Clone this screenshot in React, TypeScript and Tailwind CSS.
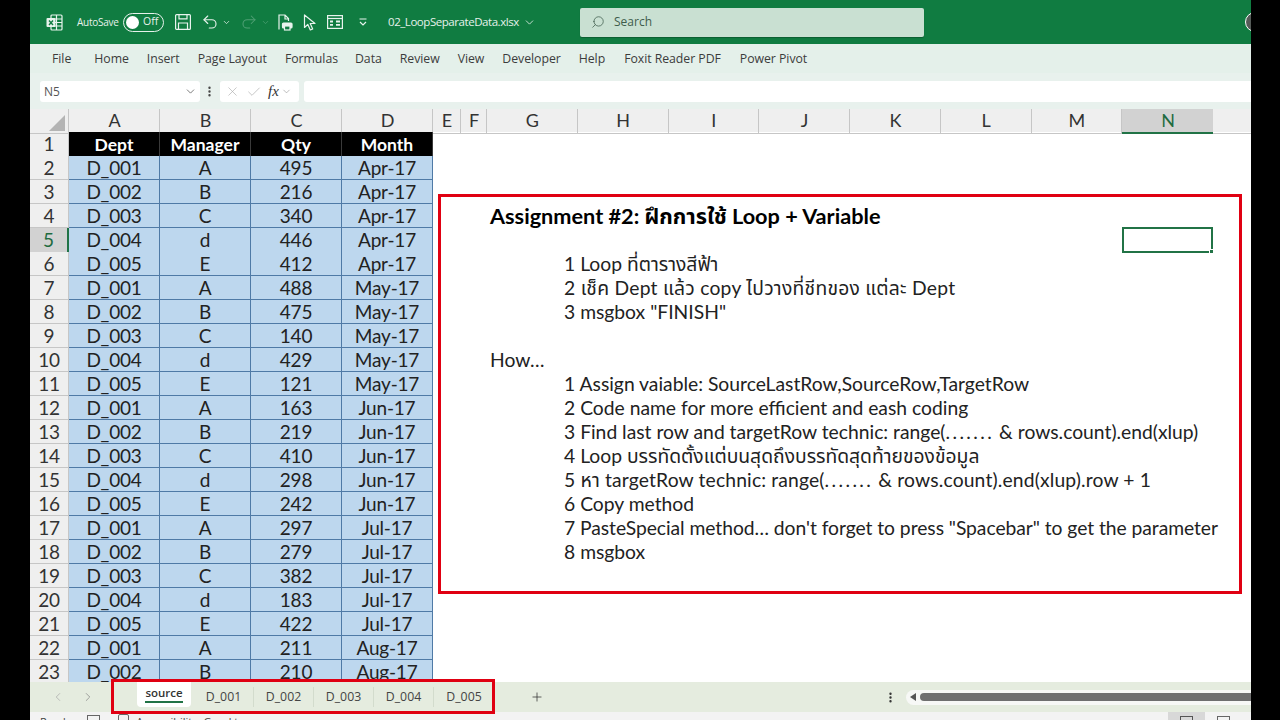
import type { ReactNode } from "react";
import { Check, ChevronDown, ChevronLeft, ChevronRight, MoreVertical, Plus, Redo2, Search, Undo2, X } from "lucide-react";

const UI = "font-['Open_Sans','Noto_Sans',sans-serif]";
const CELL = "font-['Lato','Noto_Sans','Noto_Sans_Thai','Tahoma','DejaVu_Sans',sans-serif]";

const depts = ["D_001", "D_002", "D_003", "D_004", "D_005"];
const managers = ["A", "B", "C", "d", "E"];
const qty = [495, 216, 340, 446, 412, 488, 475, 140, 429, 121, 163, 219, 410, 298, 242, 297, 279, 382, 183, 422, 211, 210];
const months = ["Apr-17", "May-17", "Jun-17", "Jul-17", "Aug-17"];
const columns = ["A", "B", "C", "D", "E", "F", "G", "H", "I", "J", "K", "L", "M", "N"];
const ribbon: [string, string][] = [
  ["File", "ml-[22px]"], ["Home", "ml-[23px]"], ["Insert", "ml-[18px]"], ["Page Layout", "ml-[18px]"], ["Formulas", "ml-[18px]"],
  ["Data", "ml-[17px]"], ["Review", "ml-[18px]"], ["View", "ml-[18px]"], ["Developer", "ml-[18px]"], ["Help", "ml-[18px]"],
  ["Foxit Reader PDF", "ml-[19px]"], ["Power Pivot", "ml-[19px]"],
];
const GRID = "grid grid-cols-[39px_91px_91px_91px_91px_28px_26px_repeat(8,90.75px)_38px]";

function ExcelLogo() {
  return (
    <svg width="17" height="17" viewBox="0 0 17 17" fill="none" stroke="#e8f3ed" strokeWidth="1.2">
      <rect x="5" y="1" width="11" height="15" rx="1" />
      <path d="M10.5 1v15M5 5h11M5 8.5h11M5 12h11" />
      <rect x="0.5" y="4" width="9" height="9" rx="1" fill="#e8f3ed" stroke="none" />
      <path d="M3 6.5l4 4.5M7 6.5l-4 4.5" stroke="#107c41" strokeWidth="1.4" />
    </svg>
  );
}

function SaveIcon() {
  return (
    <svg width="16" height="16" viewBox="0 0 16 16" fill="none" stroke="#e8f3ed" strokeWidth="1.2">
      <rect x="0.6" y="0.6" width="14.8" height="14.8" rx="1" />
      <path d="M4 0.6v4.2h8V0.6M3.5 15.4V9h9v6.4" />
    </svg>
  );
}

function PrintPreview() {
  return (
    <svg width="15" height="17" viewBox="0 0 15 17" fill="none" stroke="#e8f3ed" strokeWidth="1.2">
      <path d="M1 15.5V1h6l3.5 3.5V7M7 1v4h3.5" />
      <rect x="4.5" y="9" width="9.5" height="5" rx="1" fill="#e8f3ed" />
      <rect x="6.5" y="12" width="5.5" height="4" fill="#107c41" />
    </svg>
  );
}

function CursorIcon() {
  return (
    <svg width="15" height="17" viewBox="0 0 15 17" fill="none" stroke="#e8f3ed" strokeWidth="1.2" strokeLinejoin="round">
      <path d="M1.5 1v12.5l3.3-3 2.5 5.5 2.4-1.1-2.5-5.4H12z" />
    </svg>
  );
}

function FormIcon() {
  return (
    <svg width="16" height="14" viewBox="0 0 16 14" fill="none" stroke="#e8f3ed" strokeWidth="1.2">
      <rect x="0.6" y="0.6" width="14.8" height="12.8" />
      <path d="M0.6 3.5h14.8" />
      <path d="M3 6.5h3M3 9.8h3M9 6.5h4M9 9.8h4" strokeWidth="1.8" />
    </svg>
  );
}

function QuickAccessMenu() {
  return (
    <svg width="8" height="8" viewBox="0 0 8 8" fill="none" stroke="#e8f3ed" strokeWidth="1.2">
      <path d="M0.5 1h7M1 4l3 3 3-3" />
    </svg>
  );
}

function TitleBar() {
  return (
    <div className={`${UI} flex h-[44px] items-center overflow-hidden bg-[#107c41] text-[#e6f1eb]`}>
      <div className="ml-[16px]"><ExcelLogo /></div>
      <span className="ml-[14px] w-[40px] whitespace-nowrap text-[10px] tracking-[-0.25px]">AutoSave</span>
      <div className="ml-[6px] flex h-[19px] w-[41px] items-center rounded-full border border-[#e6f1eb] pl-[2px]">
        <span className="h-[13px] w-[13px] rounded-full bg-white" />
        <span className="ml-[4px] text-[10.5px]">Off</span>
      </div>
      <div className="ml-[11px] flex"><SaveIcon /></div>
      <Undo2 size={18} strokeWidth={1.5} className="ml-[10px]" />
      <ChevronDown size={9} strokeWidth={2} className="ml-[3px]" />
      <Redo2 size={18} strokeWidth={1.4} className="ml-[9px] text-[#4f9f74]" />
      <ChevronDown size={9} strokeWidth={2} className="ml-[3px] text-[#4f9f74]" />
      <div className="ml-[8px] flex"><PrintPreview /></div>
      <div className="ml-[10px] flex"><CursorIcon /></div>
      <div className="ml-[9px] flex"><FormIcon /></div>
      <div className="ml-[16px] flex"><QuickAccessMenu /></div>
      <span className="ml-[21px] w-[131px] whitespace-nowrap text-[11.5px] tracking-[-0.45px]">02_LoopSeparateData.xlsx</span>
      <ChevronDown size={13} strokeWidth={1.5} className="ml-[4px]" />
      <div className="ml-[44px] flex h-[29px] w-[344px] items-center rounded-[2px] bg-[#c9e0d2] pl-[11px] text-[#3f5c4c] shadow-[0_1px_1px_rgba(0,0,0,0.25)]">
        <Search size={14} strokeWidth={1.3} className="-scale-x-100" />
        <span className="ml-[9px] text-[12px]">Search</span>
      </div>
      <div className="ml-auto mr-[-14px] h-[20px] w-[20px] shrink-0 rounded-full border border-white bg-[#555b58]" />
    </div>
  );
}

function RibbonTabs() {
  return (
    <div className={`${UI} flex h-[29px] items-center bg-[#e4f0ea] pt-[1px] text-[12.3px] text-[#3c3c3c] shadow-[0_1px_1px_rgba(0,0,0,0.15)]`}>
      {ribbon.map(([label, margin]) => (
        <span key={label} className={`${margin} tracking-[-0.05px]`}>{label}</span>
      ))}
    </div>
  );
}

function FormulaBar() {
  return (
    <div className={`${UI} flex h-[36px] items-start bg-[#e8f1ed] pl-[10px] pt-[8px] text-[#555]`}>
      <div className="flex h-[21px] w-[160px] items-center justify-between rounded-[3px] bg-white pl-[4px] pr-[3px] text-[12px]">
        <span>N5</span>
        <ChevronDown size={13} strokeWidth={1.4} />
      </div>
      <MoreVertical size={13} strokeWidth={2.4} className="ml-[3px] mt-[4px] text-[#444]" />
      <div className="ml-[4px] flex h-[21px] w-[79px] items-center rounded-[3px] bg-white pl-[5px]">
        <X size={15} strokeWidth={1} className="text-[#aaa]" />
        <Check size={16} strokeWidth={1} className="ml-[6px] text-[#aaa]" />
        <span className="ml-[6px] font-['Liberation_Serif',serif] text-[15px] italic text-[#333]">fx</span>
        <ChevronDown size={11} strokeWidth={1.2} className="ml-[2px] text-[#888]" />
      </div>
      <div className="ml-[5px] h-[21px] flex-1 rounded-l-[3px] bg-white" />
    </div>
  );
}

function ColumnHeader() {
  return (
    <div className={`${GRID} ${CELL} h-[23px] bg-[#efefef] text-[18px] leading-[23px] text-[#333]`}>
      <div className="relative border-r border-b border-[#c6c6c6]">
        <div className="absolute bottom-[2px] right-[3px] h-0 w-0 border-b-[16px] border-l-[16px] border-b-[#b4b4b4] border-l-transparent" />
      </div>
      {columns.map((c) => (
        <div key={c} className={c === "N" ? "border-b-2 border-[#217346] bg-[#d2d2d2] pl-[1px] text-center text-[#1f6b40]" : "border-r border-b border-[#c6c6c6] pl-[1px] text-center"}>{c}</div>
      ))}
      <div className="border-b border-[#c6c6c6]" />
    </div>
  );
}

function SheetRows() {
  const rows = [1, ...qty.map((_, i) => i + 2)];
  return (
    <div className={`${CELL} text-[19px] leading-[23px] tracking-[-0.2px]`}>
      {rows.map((r) => {
        const i = r - 2;
        const values = r === 1 ? ["Dept", "Manager", "Qty", "Month"] : [depts[i % 5], managers[i % 5], String(qty[i]), months[Math.floor(i / 5)]];
        return (
          <div key={r} className={`${GRID} h-[24px]`}>
            <div className={r === 5 ? "border-r-2 border-b border-r-[#217346] border-b-[#c6c6c6] bg-[#d2d2d2] text-center text-[#1f6b40]" : "border-r border-b border-[#c6c6c6] bg-[#efefef] text-center text-[#333]"}>{r}</div>
            {values.map((v, k) =>
              r === 1 ? (
                <div key={k} className="border-r border-[#3a3a3a] bg-black text-center text-[17.5px] font-bold leading-[25px] tracking-normal text-white">{v}</div>
              ) : (
                <div key={k} className="border-r border-b border-[#4f7aa6] bg-[#bdd7ee] text-center text-[#222]">{v}</div>
              ),
            )}
            {r === 5 && (
              <div className="relative col-start-15 -mt-px h-[26px] self-start border-2 border-[#217346]">
                <span className="absolute bottom-[-3px] right-[-3px] h-[5px] w-[5px] border border-white bg-[#217346]" />
              </div>
            )}
          </div>
        );
      })}
    </div>
  );
}

const Dots = () => <span className="tracking-[2.4px]">.......</span>;

function Note({ n, className = "", children }: { n: number; className?: string; children: ReactNode }) {
  return <div className={`h-[24px] whitespace-nowrap pl-[74px] ${className}`}>{n} {children}</div>;
}

function NotesBox() {
  return (
    <div className={`${CELL} absolute left-[408px] top-[85px] h-[400px] w-[804px] border-[3px] border-[#e00012] pl-[49px] pt-[7px] text-[19.3px] leading-[24px] text-[#222]`}>
      <div className="h-[48px] text-[21.7px] font-bold text-black">Assignment #2: ฝึกการใช้ Loop + Variable</div>
      <Note n={1}>Loop ที่ตารางสีฟ้า</Note>
      <Note n={2} className="tracking-[0.25px]">เช็ค Dept แล้ว copy ไปวางที่ชีทของ แต่ละ Dept</Note>
      <Note n={3}>msgbox "FINISH"</Note>
      <div className="h-[24px]" />
      <div className="h-[24px]">How…</div>
      <Note n={1}>Assign vaiable: SourceLastRow,SourceRow,TargetRow</Note>
      <Note n={2}>Code name for more efficient and eash coding</Note>
      <Note n={3}>Find last row and targetRow technic: range(<Dots /> &amp; rows.count).end(xlup)</Note>
      <Note n={4}>Loop บรรทัดตั้งแต่บนสุดถึงบรรทัดสุดท้ายของข้อมูล</Note>
      <Note n={5} className="tracking-[0.15px]">หา targetRow technic: range(<Dots /> &amp; rows.count).end(xlup).row + 1</Note>
      <Note n={6}>Copy method</Note>
      <Note n={7} className="tracking-[-0.05px]">PasteSpecial method… don't forget to press "Spacebar" to get the parameter</Note>
      <Note n={8}>msgbox</Note>
    </div>
  );
}

function SheetTabs() {
  return (
    <div className={`${UI} relative flex h-[30px] shrink-0 items-center bg-[#e5ecdf] text-[12.3px] text-[#444]`}>
      <ChevronLeft size={14} strokeWidth={1.3} className="ml-[21px] text-[#aaa]" />
      <ChevronRight size={14} strokeWidth={1.3} className="ml-[16px] text-[#888]" />
      <div className="ml-[42px] flex h-[25px] w-[54px] flex-col items-center self-start rounded-b-[4px] bg-white pt-[3px] text-[11.5px] font-semibold text-[#333]">
        <span className="leading-[15px]">source</span>
        <span className="mt-[1px] h-[2px] w-[38px] bg-[#217346]" />
      </div>
      <div className="ml-[3px] flex">
        {depts.map((d) => (
          <div key={d} className="flex h-[20px] w-[60px] items-center justify-center border-r border-[#d3dccd] last:border-r-0">{d}</div>
        ))}
      </div>
      <Plus size={14} strokeWidth={1.3} className="ml-[36px] text-[#333]" />
      <MoreVertical size={13} strokeWidth={2.4} className="ml-[340px] text-[#333]" />
      <div className="ml-[9px] flex h-[15px] flex-1 items-center rounded-l-full bg-[#f7f8f6] pl-[4px]">
        <span className="h-0 w-0 border-y-[4px] border-r-[6px] border-y-transparent border-r-[#555]" />
        <span className="ml-[4px] h-[8px] flex-1 rounded-l-full bg-[#6f6f6f]" />
      </div>
      <div className="absolute left-[81px] top-[-3px] h-[35px] w-[384px] border-[3px] border-[#e00012]" />
    </div>
  );
}

function StatusBar() {
  return (
    <div className={`${UI} flex h-[8px] shrink-0 items-start overflow-hidden bg-[#f3f3f3] text-[11px] leading-[14px] text-[#444]`}>
      <span className="ml-[10px] mt-[3px]">Ready</span>
      <span className="ml-[16px] mt-[3px] h-[12px] w-[13px] border border-[#666]" />
      <span className="ml-[18px] mt-[2px] h-[12px] w-[11px] rounded-[2px] border border-[#666]" />
      <span className="ml-[7px] mt-[3px]">Accessibility: Good to go</span>
      <div className="ml-auto flex h-full items-start">
        <div className="flex h-full w-[37px] justify-center bg-[#d8d8d8] pt-[4px]"><span className="h-[12px] w-[13px] border border-[#555]" /></div>
        <div className="mr-[9px] flex h-full w-[37px] justify-center pt-[4px]"><span className="h-[12px] w-[13px] border border-[#666]" /></div>
      </div>
    </div>
  );
}

export default function App() {
  return (
    <div className="flex h-[720px] w-[1280px] overflow-hidden bg-black">
      <div className="w-[30px] shrink-0" />
      <div className="flex w-[1221px] shrink-0 flex-col overflow-hidden bg-white">
        <TitleBar />
        <RibbonTabs />
        <FormulaBar />
        <div className="relative min-h-0 flex-1">
          <ColumnHeader />
          <SheetRows />
          <NotesBox />
        </div>
        <SheetTabs />
        <StatusBar />
      </div>
    </div>
  );
}
